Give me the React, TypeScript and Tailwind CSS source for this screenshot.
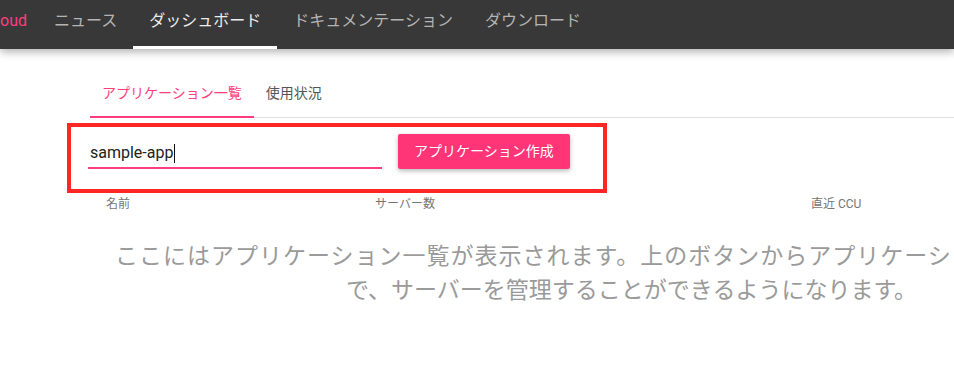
import React from "react";

const navItems = ["ニュース", "ダッシュボード", "ドキュメンテーション", "ダウンロード"];

export default function App() {
  return (
    <div className="w-full h-screen overflow-hidden bg-white font-['Roboto','Noto_Sans_CJK_JP',sans-serif]">
      <header className="relative z-10 flex h-[49px] bg-[#383838] shadow-[0_3px_8px_rgba(0,0,0,0.3)]">
        <div className="w-[38px] pt-[9px] text-[16px] leading-[24px] text-[#ff3d7c]">oud</div>
        {navItems.map((item, i) => (
          <div
            key={item}
            className={
              i === 1
                ? "px-4 pt-[9px] text-[16px] leading-[24px] text-[#ececec] border-b-[3px] border-white"
                : "px-4 pt-[9px] text-[16px] leading-[24px] text-[#b4b4b4] border-b-[3px] border-transparent"
            }
          >
            {item}
          </div>
        ))}
      </header>

      <div className="ml-[90px] mt-[21px] flex h-12 border-b border-[#e0e0e0]">
        <div className="flex items-center px-3 text-[14px] text-[#ff3d7c] border-b-2 border-[#ff3d7c] -mb-px">
          アプリケーション一覧
        </div>
        <div className="flex items-center px-3 text-[14px] text-[#555555]">使用状況</div>
      </div>

      <div className="ml-[67px] mt-[5px] flex h-[70px] w-[540px] items-start border-[4px] border-[#ff2626]">
        <div className="ml-[17px] mt-[14px] flex h-[28px] w-[294px] items-center border-b-2 border-[#ff3d7c] pb-[2px] pl-[2px]">
          <span className="text-[16px] leading-[22px] text-[#222222]">sample-app</span>
          <span className="ml-px h-[19px] w-px bg-[#111111]" />
        </div>
        <button className="ml-4 mt-[7px] h-[35px] rounded-[2px] bg-[#ff3577] px-4 text-[14px] text-white shadow-[0_2px_5px_rgba(0,0,0,0.28)]">
          アプリケーション作成
        </button>
      </div>

      <div className="ml-[106px] mt-[3px] flex h-4 text-[12px] leading-4 text-[#757575]">
        <div className="w-[269px]">名前</div>
        <div className="w-[436px]">サーバー数</div>
        <div>直近 CCU</div>
      </div>

      <div className="mt-[28px] text-[23px] leading-[34px] text-[#9a9a9a] whitespace-nowrap">
        <div className="ml-[115px] tracking-[1px]">
          ここにはアプリケーション一覧が表示されます。上のボタンからアプリケーションを作成すること
        </div>
        <div className="ml-[346px]">で、サーバーを管理することができるようになります。</div>
      </div>
    </div>
  );
}
